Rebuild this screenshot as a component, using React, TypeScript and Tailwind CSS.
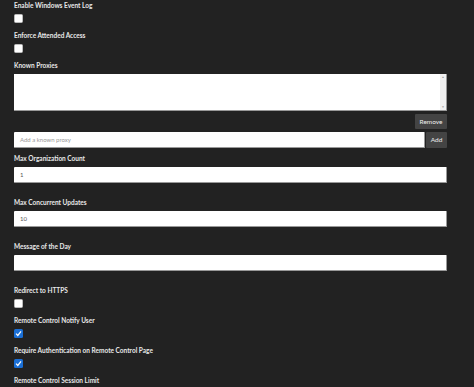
import React from "react";

const Label = ({ text, className = "" }: { text: string; className?: string }) => (
  <div className={`h-[10px] leading-[10px] text-[6.5px] font-bold text-[#e8e8e8] ${className}`}>{text}</div>
);

const Check = ({ checked = false }: { checked?: boolean }) =>
  checked ? (
    <div className="w-[9px] h-[9px] rounded-[1.5px] bg-[#1a6fd6] flex items-center justify-center">
      <svg width="7" height="7" viewBox="0 0 10 10">
        <path d="M1.5 5.2 L4 7.8 L8.6 2" fill="none" stroke="white" strokeWidth="1.8" />
      </svg>
    </div>
  ) : (
    <div className="w-[9px] h-[9px] rounded-[1.5px] bg-white border border-[#bbb]" />
  );

const Field = ({ value = "", placeholder = "" }: { value?: string; placeholder?: string }) => (
  <div className="h-[16px] bg-white border-b border-r border-[#999] rounded-[1px] flex items-center px-[6px] text-[6px]">
    {value ? <span className="text-[#555]">{value}</span> : <span className="text-[#999]">{placeholder}</span>}
  </div>
);

export default function App() {
  return (
    <div
      className="w-[474px] h-[387px] bg-[#222222] overflow-hidden"
      style={{ fontFamily: "Lato, 'Liberation Sans', sans-serif" }}
    >
      <div className="ml-[14px] w-[433px] pt-[1px] flex flex-col">
        <Label text="Enable Windows Event Log" />
        <div className="mt-[3px]">
          <Check />
        </div>

        <Label text="Enforce Attended Access" className="mt-[8px]" />
        <div className="mt-[3px]">
          <Check />
        </div>

        <Label text="Known Proxies" className="mt-[8px]" />
        <div className="mt-[3px] h-[37px] bg-white border-b border-r border-[#999] flex justify-end">
          <div className="w-[6px] h-full bg-[#f1f1f1] flex flex-col justify-between items-center py-[1px]">
            <span className="text-[3px] leading-[4px] text-[#999]">▲</span>
            <span className="text-[3px] leading-[4px] text-[#999]">▼</span>
          </div>
        </div>
        <div className="mt-[3px] flex justify-end">
          <button className="w-[32px] h-[15px] bg-[#444] text-[#eee] text-[6.5px] rounded-[1px]">Remove</button>
        </div>
        <div className="mt-[3px] flex gap-[1px]">
          <div className="flex-1">
            <Field placeholder="Add a known proxy" />
          </div>
          <button className="w-[21px] h-[16px] bg-[#444] text-[#eee] text-[6.5px] rounded-[1px]">Add</button>
        </div>

        <Label text="Max Organization Count" className="mt-[6px]" />
        <div className="mt-[3px]">
          <Field value="1" />
        </div>

        <Label text="Max Concurrent Updates" className="mt-[15px]" />
        <div className="mt-[3px]">
          <Field value="10" />
        </div>

        <Label text="Message of the Day" className="mt-[15px]" />
        <div className="mt-[3px]">
          <Field />
        </div>

        <Label text="Redirect to HTTPS" className="mt-[15px]" />
        <div className="mt-[3px]">
          <Check />
        </div>

        <Label text="Remote Control Notify User" className="mt-[8px]" />
        <div className="mt-[3px]">
          <Check checked />
        </div>

        <Label text="Require Authentication on Remote Control Page" className="mt-[8px]" />
        <div className="mt-[3px]">
          <Check checked />
        </div>

        <Label text="Remote Control Session Limit" className="mt-[8px]" />
      </div>
    </div>
  );
}
